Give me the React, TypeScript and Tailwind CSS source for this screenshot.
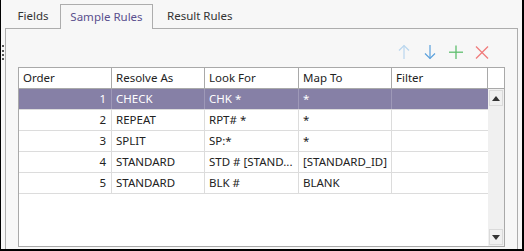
import React from "react";

const rows = [
  { n: 1, r: "CHECK", l: "CHK *", m: "*", f: "" },
  { n: 2, r: "REPEAT", l: "RPT# *", m: "*", f: "" },
  { n: 3, r: "SPLIT", l: "SP:*", m: "*", f: "" },
  { n: 4, r: "STANDARD", l: "STD # [STAND...", m: "[STANDARD_ID]", f: "" },
  { n: 5, r: "STANDARD", l: "BLK #", m: "BLANK", f: "" },
];

function UpIcon({ color }: { color: string }) {
  return (
    <svg width="16" height="16" viewBox="0 0 16 16" fill="none" stroke={color} strokeWidth="1.2">
      <path d="M8 1.5V15" />
      <path d="M3 6.5L8 1.5L13 6.5" />
    </svg>
  );
}
function DownIcon({ color }: { color: string }) {
  return (
    <svg width="16" height="16" viewBox="0 0 16 16" fill="none" stroke={color} strokeWidth="1.2">
      <path d="M8 1V14.5" />
      <path d="M3 9.5L8 14.5L13 9.5" />
    </svg>
  );
}
function PlusIcon() {
  return (
    <svg width="16" height="16" viewBox="0 0 16 16" fill="none" stroke="#5fbf6e" strokeWidth="1.3">
      <path d="M8 1.5V15" />
      <path d="M1 8.2H15" />
    </svg>
  );
}
function XIcon() {
  return (
    <svg width="16" height="16" viewBox="0 0 16 16" fill="none" stroke="#f07a7a" strokeWidth="1.3">
      <path d="M2 2.5L14 14.5" />
      <path d="M14 2.5L2 14.5" />
    </svg>
  );
}

export default function App() {
  return (
    <div
      className="w-[524px] h-[251px] bg-[#f7f7f7] border-l border-r-2 border-b-2 border-black flex flex-col overflow-hidden text-[11.5px] text-[#222]"
      style={{ fontFamily: '"Segoe UI", "Noto Sans", "Liberation Sans", sans-serif' }}
    >
      {/* Tabs */}
      <div className="h-[28px] flex items-end pl-[7px] shrink-0">
        <div className="h-[24px] w-[52px] flex items-center justify-center text-[#333] pb-[1px] pr-[2px]">Fields</div>
        <div className="h-[25px] w-[93px] -mb-px relative z-10 border border-b-0 border-[#adadad] bg-[#f7f7f7] flex items-center justify-center text-[#5a4f8e] pb-[1px]">
          Sample Rules
        </div>
        <div className="h-[24px] pl-[14px] flex items-center text-[#333] pb-[1px]">Result Rules</div>
      </div>
      <div className="flex-1 flex">
        {/* grip */}
        <div className="w-[4px] flex flex-col pt-[17px] items-center">
          <div className="w-[2px] h-[15px] border-l-2 border-dotted border-[#555]" />
        </div>
        {/* panel */}
        <div className="w-[513px] border-l border-t border-r border-[#adadad] flex flex-col px-[12px]">
          <div className="h-[38px] flex items-end justify-end gap-[10px] pr-[15px] pb-[7px]">
            <UpIcon color="#b9d6ee" />
            <DownIcon color="#5aa0dc" />
            <PlusIcon />
            <XIcon />
          </div>
          {/* grid */}
          <div className="w-[487px] h-[180px] border border-[#a9a9a9] bg-white flex flex-col">
            <div className="flex h-[21px] border-b border-[#a9a9a9] shrink-0">
              <div className="w-[93px] border-r border-[#a9a9a9] pl-[4px] flex items-center">Order</div>
              <div className="w-[93px] border-r border-[#a9a9a9] pl-[4px] flex items-center">Resolve As</div>
              <div className="w-[94px] border-r border-[#a9a9a9] pl-[4px] flex items-center">Look For</div>
              <div className="w-[93px] border-r border-[#a9a9a9] pl-[4px] flex items-center">Map To</div>
              <div className="w-[96px] border-r border-[#a9a9a9] pl-[4px] flex items-center">Filter</div>
              <div className="flex-1" />
            </div>
            <div className="flex flex-1">
              <div className="w-[469px] flex flex-col">
                {rows.map((row, i) => {
                  const sel = i === 0;
                  const base = sel ? "bg-[#8680a6] text-white" : "text-[#222]";
                  const line = sel ? "border-[#9e99b8]" : "border-[#dcdcdc]";
                  return (
                    <div key={row.n} className={`flex h-[21px] border-b border-[#dcdcdc] ${base}`}>
                      <div className={`w-[93px] border-r ${line} pr-[5px] flex items-center justify-end`}>{row.n}</div>
                      <div className={`w-[93px] border-r ${line} pl-[4px] flex items-center`}>{row.r}</div>
                      <div className={`w-[94px] border-r ${line} pl-[4px] flex items-center whitespace-nowrap overflow-hidden`}>{row.l}</div>
                      <div className={`w-[93px] border-r ${line} pl-[4px] flex items-center`}>{row.m}</div>
                      <div className="w-[96px] pl-[4px] flex items-center">{row.f}</div>
                    </div>
                  );
                })}
              </div>
              <div className="w-[16px] bg-[#f0f0f0] flex flex-col justify-between p-px">
                <div className="h-[16px] border border-[#dadada] bg-[#f0f0f0] flex items-center justify-center">
                  <svg width="8" height="5" viewBox="0 0 8 5"><path d="M0 5L4 0L8 5Z" fill="#333" /></svg>
                </div>
                <div className="h-[16px] border border-[#dadada] bg-[#f0f0f0] flex items-center justify-center">
                  <svg width="8" height="5" viewBox="0 0 8 5"><path d="M0 0L4 5L8 0Z" fill="#333" /></svg>
                </div>
              </div>
            </div>
          </div>
        </div>
      </div>
    </div>
  );
}
